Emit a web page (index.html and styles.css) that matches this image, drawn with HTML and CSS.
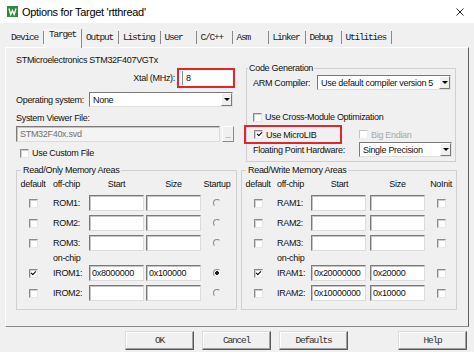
FILE: index.html
```html
<!DOCTYPE html>
<html lang="en">
<head>
  <meta charset="UTF-8">
  <title>Options for Target 'rtthread'</title>
  <link rel="stylesheet" href="styles.css">
</head>
<body>
  <div class="titlebar">
    <svg class="app-icon" width="11" height="11" viewBox="0 0 11 11">
      <rect width="11" height="11" fill="#2f8a3c"/>
      <path d="M2 2.5 L3.8 8.5 L5.5 4.5 L7.2 8.5 L9 2.5" fill="none" stroke="#fff" stroke-width="1.3"/>
    </svg>
    <span class="title">Options for Target 'rtthread'</span>
    <svg class="close" width="8" height="8" viewBox="0 0 8 8">
      <path d="M0.5 0.5 L7.5 7.5 M7.5 0.5 L0.5 7.5" stroke="#222" stroke-width="1"/>
    </svg>
  </div>

  <div class="dialog">
    <div class="tabs">
      <span class="tab">Device</span>
      <span class="tab active">Target</span>
      <span class="tab">Output</span>
      <span class="tab">Listing</span>
      <span class="tab">User</span>
      <span class="tab">C/C++</span>
      <span class="tab">Asm</span>
      <span class="tab">Linker</span>
      <span class="tab">Debug</span>
      <span class="tab">Utilities</span>
    </div>

    <div class="panel">
      <div class="top">
        <div class="chip-col">
          <div class="device">STMicroelectronics STM32F407VGTx</div>
          <div class="xtal-row">
            <span>Xtal (MHz):</span>
            <div class="xtal-box"><div class="xtal-input">8</div></div>
          </div>
          <div class="os-row">
            <span class="os-label">Operating system:</span>
            <div class="select os-select"><span>None</span><span class="drop"></span></div>
          </div>
          <div class="svf-label">System Viewer File:</div>
          <div class="svf-row">
            <div class="field svf-input">STM32F40x.svd</div>
            <div class="browse">...</div>
          </div>
          <div class="check custom"><span class="box"></span>Use Custom File</div>
        </div>

        <fieldset class="group codegen">
          <legend>Code Generation</legend>
          <div class="cg-row">
            <span class="cg-label">ARM Compiler:</span>
            <div class="select arm-select"><span>Use default compiler version 5</span><span class="drop"></span></div>
          </div>
          <div class="check cross"><span class="box"></span>Use Cross-Module Optimization</div>
          <div class="cg-opts">
            <div class="check hl"><span class="box checked"></span>Use MicroLIB</div>
            <div class="check big"><span class="box"></span>Big Endian</div>
          </div>
          <div class="cg-row fp">
            <span class="fp-label">Floating Point Hardware:</span>
            <div class="select fp-select"><span>Single Precision</span><span class="drop"></span></div>
          </div>
        </fieldset>
      </div>

      <div class="mem">
        <fieldset class="group rom">
          <legend>Read/Only Memory Areas</legend>
          <div class="mem-grid rom-grid">
            <span class="hd">default</span><span class="hd lbl">off-chip</span><span class="hd">Start</span><span class="hd">Size</span><span class="hd">Startup</span>

            <span class="box"></span><span class="lbl">ROM1:</span><div class="field"></div><div class="field"></div><span class="radio"></span>
            <span class="box"></span><span class="lbl">ROM2:</span><div class="field"></div><div class="field"></div><span class="radio"></span>
            <span class="box"></span><span class="lbl">ROM3:</span><div class="field"></div><div class="field"></div><span class="radio"></span>
            <span class="lbl onchip">on-chip</span>
            <span class="box checked"></span><span class="lbl">IROM1:</span><div class="field">0x8000000</div><div class="field">0x100000</div><span class="radio on"></span>
            <span class="box"></span><span class="lbl">IROM2:</span><div class="field"></div><div class="field"></div><span class="radio"></span>
          </div>
        </fieldset>

        <fieldset class="group ram">
          <legend>Read/Write Memory Areas</legend>
          <div class="mem-grid ram-grid">
            <span class="hd">default</span><span class="hd lbl">off-chip</span><span class="hd">Start</span><span class="hd">Size</span><span class="hd">NoInit</span>

            <span class="box"></span><span class="lbl">RAM1:</span><div class="field start"></div><div class="field"></div><span class="box"></span>
            <span class="box"></span><span class="lbl">RAM2:</span><div class="field start"></div><div class="field"></div><span class="box"></span>
            <span class="box"></span><span class="lbl">RAM3:</span><div class="field start"></div><div class="field"></div><span class="box"></span>
            <span class="lbl onchip">on-chip</span>
            <span class="box checked"></span><span class="lbl">IRAM1:</span><div class="field start">0x20000000</div><div class="field">0x20000</div><span class="box"></span>
            <span class="box"></span><span class="lbl">IRAM2:</span><div class="field start">0x10000000</div><div class="field">0x10000</div><span class="box"></span>
          </div>
        </fieldset>
      </div>
    </div>

    <div class="footer">
      <span class="btn">OK</span>
      <span class="btn">Cancel</span>
      <span class="btn">Defaults</span>
      <span class="btn help">Help</span>
    </div>
  </div>
</body>
</html>
```

FILE: styles.css
```css
* {
  box-sizing: border-box;
}

body {
  margin: 0;
  width: 474px;
  height: 355px;
  overflow: hidden;
  background: #fff;
  font-family: "Liberation Sans", Arial, sans-serif;
  font-size: 9px;
  letter-spacing: -0.3px;
  color: #111;
}

/* Window title */
.titlebar {
  height: 23px;
  display: flex;
  align-items: center;
  padding: 0 10px 0 7px;
  background: #fff;
}

.app-icon {
  margin-right: 4px;
}

.title {
  font-size: 11px;
  letter-spacing: -0.3px;
  color: #000;
}

.close {
  margin-left: auto;
}

.dialog {
  height: 329px;
  padding-top: 4px;
  background: #f0f0f0;
}

/* Tab strip */
.tabs {
  display: flex;
  height: 20px;
  padding-left: 7px;
  font-family: "Liberation Mono", monospace;
  font-size: 9.5px;
  letter-spacing: -1.2px;
  color: #222;
}

.tab {
  min-width: 36px;
  height: 13px;
  margin-top: 4px;
  padding: 0 5px 0 4px;
  line-height: 13px;
  border-right: 1px solid #8a8a8a;
}

.tab.active {
  height: 19px;
  margin-top: 2px;
  line-height: 12px;
  background: #f4f4f4;
  border-left: 1px solid #fff;
}

.panel {
  width: 464px;
  height: 280px;
  margin-left: 5px;
  padding: 6px 0 0 10px;
  border-top: 1px solid #fff;
  border-left: 1px solid #fff;
  border-right: 1px solid #5f5f5f;
  border-bottom: 1px solid #8a8a8a;
}

.top {
  display: flex;
  align-items: flex-start;
}

/* Left column: device, clock, OS */
.chip-col {
  width: 219px;
}

.device {
  line-height: 12px;
}

.xtal-row {
  display: flex;
  justify-content: flex-end;
  align-items: center;
  gap: 2px;
  margin-top: 2px;
}

.xtal-box {
  width: 58px;
  height: 20px;
  padding: 1px 1px 1px 3px;
  border: 2px solid #e3262c;
  background: #f8f8f8;
}

.xtal-input {
  height: 100%;
  padding-left: 3px;
  line-height: 14px;
  background: #fff;
  border-left: 1px solid #8c8c8c;
}

.os-row {
  display: flex;
  align-items: center;
  margin-top: 4px;
}

.os-label {
  width: 73px;
}

.select {
  display: flex;
  align-items: center;
  flex: none;
  height: 15px;
  padding-left: 3px;
  background: #fff;
  border: 1px solid;
  border-color: #7a7a7a #e0e0e0 #e0e0e0 #7a7a7a;
}

.drop {
  display: flex;
  align-items: center;
  justify-content: center;
  align-self: stretch;
  width: 11px;
  margin: 0 0 0 auto;
  background: #efefef;
  border: 1px solid;
  border-color: #fff #7a7a7a #7a7a7a #fff;
}

.drop::after {
  content: "";
  border-left: 3px solid transparent;
  border-right: 3px solid transparent;
  border-top: 3px solid #000;
}

.os-select {
  width: 144px;
}

.svf-label {
  margin-top: 5px;
  line-height: 12px;
}

.svf-row {
  display: flex;
  gap: 2px;
  margin-top: 2px;
}

.field {
  height: 16px;
  padding-left: 2px;
  line-height: 14px;
  background: #fff;
  border: 1px solid;
  border-color: #7a7a7a #dcdcdc #dcdcdc #7a7a7a;
  box-shadow: inset 1px 1px 0 #c4c4c4;
}

.svf-input {
  width: 204px;
  padding-left: 3px;
  background: #f4f4f4;
  color: #707070;
}

.browse {
  width: 12px;
  height: 16px;
  font-size: 7px;
  line-height: 18px;
  text-align: center;
  color: #555;
  border: 1px solid;
  border-color: #fff #8a8a8a #8a8a8a #fff;
}

/* Checkboxes and radios */
.check {
  display: flex;
  align-items: center;
  height: 12px;
}

.check .box {
  margin-right: 3px;
}

.box {
  display: inline-block;
  width: 9px;
  height: 9px;
  background: #fdfdfd;
  border: 1px solid;
  border-color: #8a8a8a #e6e6e6 #e6e6e6 #8a8a8a;
  box-shadow: inset 1px 1px 0 #cfcfcf;
}

.box.checked::after {
  content: "";
  display: block;
  width: 4px;
  height: 2px;
  margin: 1px 0 0 1.5px;
  border-left: 1.5px solid #000;
  border-bottom: 1.5px solid #000;
  transform: rotate(-45deg);
}

.radio {
  display: inline-block;
  width: 8px;
  height: 8px;
  border-radius: 50%;
  border: 1px solid;
  border-color: #8a8a8a #f0f0f0 #f0f0f0 #8a8a8a;
}

.radio.on {
  background: radial-gradient(circle, #222 0 1.6px, #fff 2.2px);
}

.custom {
  margin-top: 5px;
  padding-left: 4px;
}

/* Group boxes */
.group {
  margin: 0;
  min-width: 0;
  border: 1px solid #d0d0d0;
}

.group legend {
  padding: 0 2px;
  line-height: 12px;
}

.codegen {
  width: 210px;
  margin: 8px 0 0 11px;
  padding: 0 0 4px 6px;
}

.codegen legend {
  margin-left: -5px;
  padding: 0 1px;
}

.cg-row {
  display: flex;
  align-items: center;
  margin-top: 1px;
}

.cg-label {
  width: 64px;
}

.arm-select {
  width: 134px;
}

.cross {
  margin-top: 21px;
}

.cg-opts {
  display: flex;
  align-items: center;
  margin-top: 2px;
}

.hl {
  width: 98px;
  height: 19px;
  margin-left: -9px;
  padding-left: 8px;
  border: 2px solid #e3262c;
}

.big {
  margin-left: 17px;
  color: #a8a8a8;
}

.big .box {
  border-color: #c4c4c4 #efefef #efefef #c4c4c4;
  box-shadow: none;
}

.fp {
  margin-top: -2px;
}

.fp-label {
  width: 106px;
}

.fp-select {
  width: 93px;
}

/* Memory areas */
.mem {
  display: flex;
  gap: 4px;
  margin-top: 2px;
}

.rom,
.ram {
  padding: 2px 0 8px 4px;
}

.rom {
  width: 221px;
}

.ram {
  width: 216px;
}

.mem-grid {
  display: grid;
  grid-template-rows: 13px 16px 16px 16px 6px 16px 16px;
  column-gap: 2px;
  row-gap: 4px;
  align-items: center;
}

.rom-grid {
  grid-template-columns: 24px 40px 55px 55px 28px;
}

.ram-grid {
  grid-template-columns: 24px 37px 57px 55px 28px;
}

.ram-grid .start {
  width: 55px;
}

.hd {
  justify-self: center;
  line-height: 13px;
}

.hd.lbl {
  justify-self: start;
}

.mem-grid .box,
.mem-grid .radio {
  justify-self: center;
}

.rom-grid .lbl {
  padding-left: 6px;
}

.ram-grid .lbl {
  padding-left: 5px;
}

.onchip {
  grid-column: 2 / 6;
  line-height: 6px;
}

/* Dialog buttons */
.footer {
  display: flex;
  gap: 8px;
  padding: 4px 7px 0 125px;
}

.btn {
  width: 69px;
  height: 19px;
  font-family: "Liberation Mono", monospace;
  font-size: 9.5px;
  letter-spacing: -1.2px;
  line-height: 17px;
  text-align: center;
  color: #333;
  background: #f0f0f0;
  border: 1px solid;
  border-color: #dcdcdc #5a5a5a #5a5a5a #dcdcdc;
  box-shadow: inset -1px -1px 0 #a0a0a0, inset 1px 1px 0 #fff;
}

.help {
  margin-left: auto;
}
```
